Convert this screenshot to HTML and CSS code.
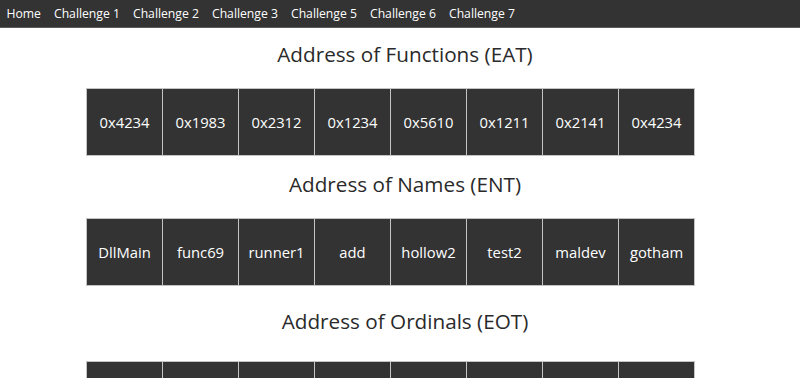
FILE: index.html
```html
<!DOCTYPE html>
<html>
<head>
<meta charset="utf-8">
<title>Export tables</title>
<link rel="stylesheet" href="styles.css">
</head>
<body>
<nav class="topnav">
  <a class="nav-link" href="#">Home</a>
  <a class="nav-link" href="#">Challenge 1</a>
  <a class="nav-link" href="#">Challenge 2</a>
  <a class="nav-link" href="#">Challenge 3</a>
  <a class="nav-link" href="#">Challenge 5</a>
  <a class="nav-link" href="#">Challenge 6</a>
  <a class="nav-link" href="#">Challenge 7</a>
</nav>
<main class="content">
  <section class="block block-eat">
    <h2 class="block-title">Address of Functions (EAT)</h2>
    <table class="cells">
      <tr>
        <td>0x4234</td><td>0x1983</td><td>0x2312</td><td>0x1234</td><td>0x5610</td><td>0x1211</td><td>0x2141</td><td>0x4234</td>
      </tr>
    </table>
  </section>
  <section class="block block-ent">
    <h2 class="block-title">Address of Names (ENT)</h2>
    <table class="cells">
      <tr>
        <td>DllMain</td><td>func69</td><td>runner1</td><td>add</td><td>hollow2</td><td>test2</td><td>maldev</td><td>gotham</td>
      </tr>
    </table>
  </section>
  <section class="block block-eot">
    <h2 class="block-title">Address of Ordinals (EOT)</h2>
    <table class="cells">
      <tr>
        <td></td><td></td><td></td><td></td><td></td><td></td><td></td><td></td>
      </tr>
    </table>
  </section>
</main>
</body>
</html>
```
FILE: styles.css
```css
html, body {
  margin: 0;
  padding: 0;
  background: #ffffff;
}
body {
  font-family: "Open Sans", "Noto Sans", sans-serif;
  color: #333333;
}
.topnav {
  display: flex;
  height: 28px;
  background: #333333;
  border-bottom: 1px solid #5a5a5a;
  box-sizing: border-box;
  padding-left: 0;
}
.nav-link {
  color: #ffffff;
  text-decoration: none;
  font-size: 12.2px;
  line-height: 28px;
  padding: 0 6.5px;
}
.content {
  display: flex;
  flex-direction: column;
}
.block-title {
  margin: 0;
  font-size: 20.7px;
  font-weight: 400;
  line-height: 30px;
  text-align: center;
  padding-left: 10px;
  color: #2a2a2a;
}
.block-eat .block-title { margin-top: 11px; margin-bottom: 19px; }
.block-ent .block-title { margin-top: 13px; margin-bottom: 19px; }
.block-eot .block-title { margin-top: 20px; margin-bottom: 25px; }
.cells {
  border-collapse: collapse;
  margin-left: 86px;
}
.cells td {
  width: 76px;
  height: 67px;
  padding: 0;
  box-sizing: border-box;
  border: 1px solid #c4c4c4;
  background: #333333;
  color: #ffffff;
  font-size: 14.8px;
  text-align: center;
  vertical-align: middle;
}
```
